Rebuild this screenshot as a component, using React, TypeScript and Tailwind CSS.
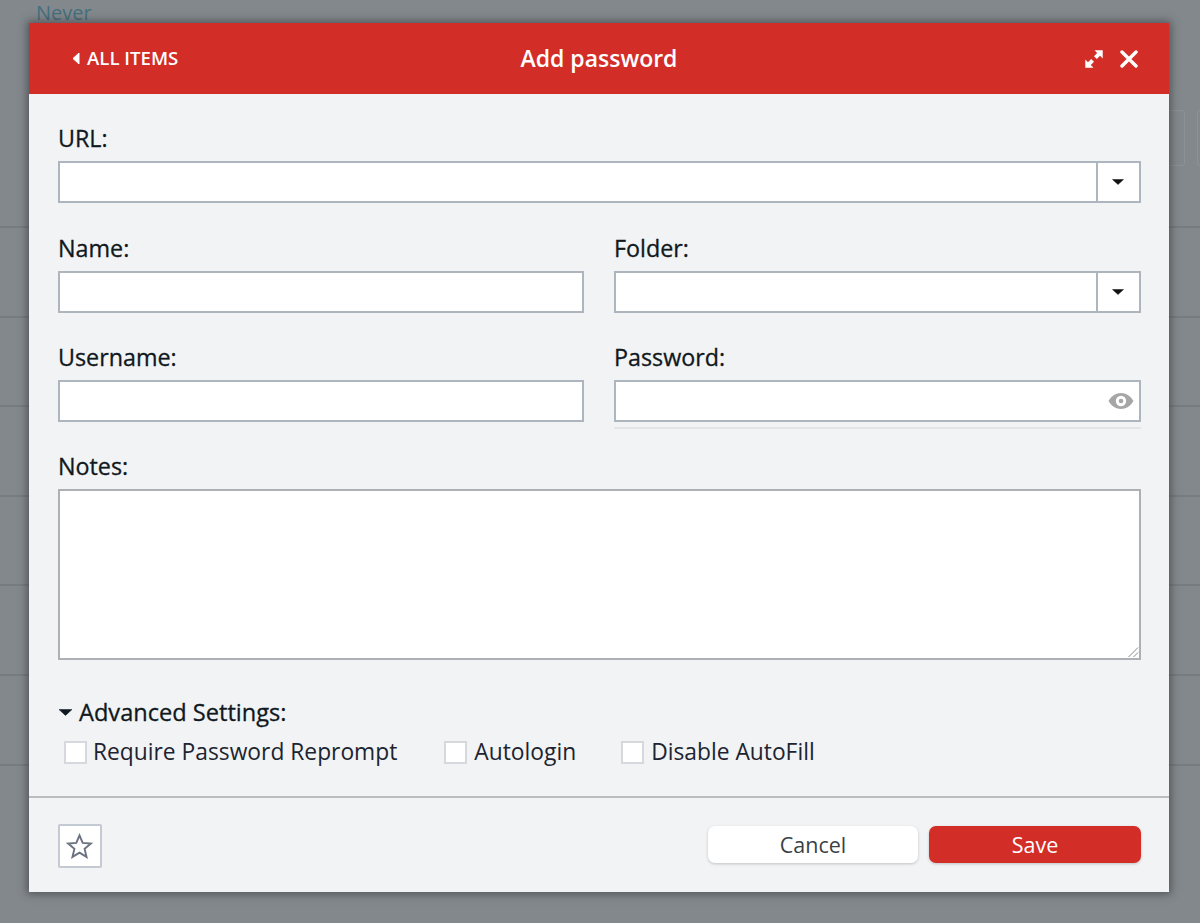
import React from "react";

const Caret = ({ className = "" }: { className?: string }) => (
  <svg width="12" height="6" viewBox="0 0 12 6" className={className}>
    <path d="M0.5 0.5H11.5L6 5.5Z" fill="currentColor" stroke="currentColor" strokeWidth="0.5" strokeLinejoin="round" />
  </svg>
);

const Label = ({ children }: { children: React.ReactNode }) => (
  <label className="block h-[28px] mb-[9px] text-[23.300px] leading-[28px] font-medium text-[#101820] [-webkit-text-stroke:0.3px_#101820]">{children}</label>
);

const Input = () => <div className="h-[42px] bg-white border-2 border-[#adb5bf]" />;

const Combo = () => (
  <div className="h-[42px] bg-white border-2 border-[#adb5bf] flex">
    <div className="flex-1" />
    <div className="w-[43px] pr-[1px] border-l-2 border-[#adb5bf] flex items-center justify-center text-[#111]">
      <Caret />
    </div>
  </div>
);

const Check = ({ label, className = "", gap = "mr-[7px]" }: { label: string; className?: string; gap?: string }) => (
  <div className={`flex items-center ${className}`}>
    <span className={`w-[23px] h-[23px] bg-white border-2 border-[#d5d9de] ${gap}`} />
    <span className="text-[22.800px] leading-[30px] text-[#1c2430]">{label}</span>
  </div>
);

export default function App() {
  return (
    <div className="relative w-[1200px] h-[923px] overflow-hidden bg-[#83888c]" style={{ fontFamily: '"Open Sans", "Noto Sans", sans-serif' }}>
      {/* Dimmed page behind the dialog */}
      <div className="h-[226px] relative">
        <div className="pl-[36px] text-[20px] leading-[25px] text-[#43707f]">Never</div>
        <div className="absolute left-[1120px] top-[110px] w-[65px] h-[56px] border border-[#8d9296] rounded-[3px]" />
        <div className="absolute left-[1197px] top-[110px] w-[65px] h-[56px] border border-[#8d9296] rounded-[3px]" />
      </div>
      <div className="h-[90px] border-t-2 border-[#777c80]" />
      <div className="h-[89px] border-t-2 border-[#777c80]" />
      <div className="h-[90px] border-t-2 border-[#777c80]" />
      <div className="h-[89px] border-t-2 border-[#777c80]" />
      <div className="h-[90px] border-t-2 border-[#777c80]" />
      <div className="h-[90px] border-t-2 border-[#777c80]" />
      <div className="h-[69px] border-t-2 border-[#777c80]" />

      {/* Dialog */}
      <div className="absolute left-[29px] top-[23px] w-[1140px] h-[869px] bg-[#f2f3f5] flex flex-col shadow-[0_0_8px_2px_rgba(40,44,48,0.55)]">
        <div className="h-[71px] bg-[#d32d27] flex items-center relative text-white">
          <div className="ml-[43px] flex items-center">
            <svg width="8" height="13" viewBox="0 0 8 13" className="mr-[7px]">
              <path d="M7 1V12L1 6.500Z" fill="white" stroke="white" strokeWidth="1" strokeLinejoin="round" />
            </svg>
            <span className="text-[18.600px] font-semibold leading-none">ALL ITEMS</span>
          </div>
          <div className="absolute inset-x-0 top-[20px] text-center text-[23px] font-semibold leading-[30px]">Add password</div>
          <div className="ml-auto flex items-center mr-[31px]">
            <svg width="18" height="18" viewBox="0 0 18 18" className="mr-[17px]">
              <path d="M17.700 0.300V8.500L15 5.800L11.800 9L9 6.200L12.200 3L9.500 0.300Z M0.300 17.700V9.500L3 12.200L6.200 9L9 11.800L5.800 15L8.500 17.700Z" fill="white" />
            </svg>
            <svg width="18" height="18" viewBox="0 0 18 18">
              <path d="M2 2L16 16M16 2L2 16" stroke="white" strokeWidth="3.400" strokeLinecap="round" />
            </svg>
          </div>
        </div>

        <div className="flex-1 pl-[29px] pr-[28px] pt-[30px]">
          <Label>URL:</Label>
          <Combo />
          <div className="grid grid-cols-[526px_527px] gap-x-[30px] mt-[30.500px]">
            <div>
              <Label>Name:</Label>
              <Input />
            </div>
            <div>
              <Label>Folder:</Label>
              <Combo />
            </div>
          </div>
          <div className="grid grid-cols-[526px_527px] gap-x-[30px] mt-[30.500px]">
            <div>
              <Label>Username:</Label>
              <Input />
            </div>
            <div className="relative">
              <Label>Password:</Label>
              <div className="h-[42px] bg-white border-2 border-[#adb5bf] flex items-center justify-end pr-[5px]">
                <svg width="26" height="18" viewBox="0 0 26 18">
                  <path fillRule="evenodd" d="M0.500 9C3.500 3.800 8 1 13 1s9.500 2.800 12.500 8c-3 5.200-7.500 8-12.500 8S3.500 14.200 0.500 9ZM13 3.800a5.200 5.200 0 1 0 0 10.400a5.200 5.200 0 0 0 0-10.400ZM13 6.700a2.300 2.300 0 1 1 0 4.600a2.300 2.300 0 0 1 0-4.600Z" fill="#a6a6a6" />
                </svg>
              </div>
              <div className="absolute left-0 right-0 top-[84px] h-[2px] bg-[#e2e4e6]" />
            </div>
          </div>
          <div className="mt-[30px]">
            <Label>Notes:</Label>
            <div className="relative h-[171px] bg-white border-2 border-[#adb0b5]">
              <svg width="12" height="12" viewBox="0 0 12 12" className="absolute right-0 bottom-0">
                <path d="M1.500 11L11 1.500M6.500 11L11 6.500" stroke="#8a8a8a" strokeWidth="1" />
              </svg>
            </div>
          </div>
          <div className="mt-[37px] flex items-center h-[30px] text-[#101820]">
            <Caret className="mr-[6px] w-[15px] h-[7px]" />
            <span className="text-[23.600px] leading-[30px] font-medium [-webkit-text-stroke:0.3px_#101820]">Advanced Settings:</span>
          </div>
          <div className="mt-[10px] ml-[6px] flex items-center">
            <Check label="Require Password Reprompt" gap="mr-[6px]" />
            <Check label="Autologin" className="ml-[47px]" />
            <Check label="Disable AutoFill" className="ml-[45px]" />
          </div>
        </div>

        <div className="h-[96px] border-t-2 border-[#b9bcc0] pl-[29px] pr-[28px] pt-[26px] flex items-start">
          <button className="w-[44px] h-[44px] bg-white border-2 border-[#c3cad3] rounded-[2px] flex items-center justify-center">
            <svg width="27" height="26" viewBox="0 0 28 27" className="-ml-[1px]">
              <path d="M14 2.500L17.300 10.300L25.800 11L19.300 16.500L21.300 24.800L14 20.400L6.700 24.800L8.700 16.500L2.200 11L10.700 10.300Z" fill="none" stroke="#6b7280" strokeWidth="2" strokeLinejoin="miter" />
            </svg>
          </button>
          <div className="ml-auto mt-[2px] flex gap-x-[11px]">
            <button className="w-[210px] h-[37px] bg-white rounded-[7px] shadow-[0_1px_3px_rgba(0,0,0,0.2)] text-[21.500px] leading-[37px] text-[#3a3f44]">Cancel</button>
            <button className="w-[212px] h-[37px] bg-[#d32d27] rounded-[7px] shadow-[0_1px_3px_rgba(0,0,0,0.2)] text-[21.500px] leading-[37px] text-white">Save</button>
          </div>
        </div>
      </div>
    </div>
  );
}
